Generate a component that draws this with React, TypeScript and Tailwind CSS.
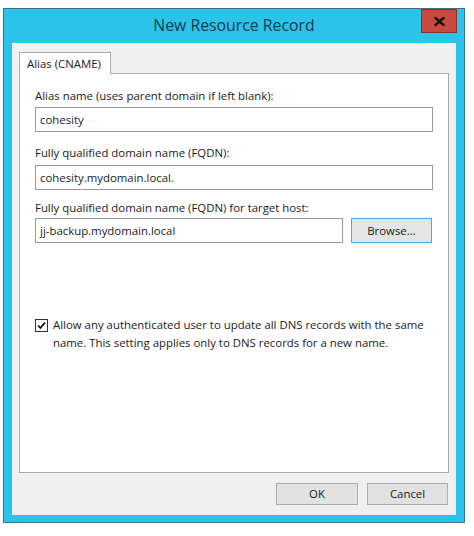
import React from "react";

const font = { fontFamily: '"Open Sans", "Noto Sans", "Liberation Sans", sans-serif' };

function Field({ value, className = "" }: { value: string; className?: string }) {
  return (
    <div
      className={`h-[25px] border border-[#9a9a9a] bg-white flex items-center pl-[4px] text-[11.4px] text-[#1a1a1a] leading-none ${className}`}
    >
      {value}
    </div>
  );
}

export default function App() {
  return (
    <div className="w-[474px] h-[536px] bg-white pt-[8px] pl-[3px]" style={font}>
      <div className="w-[462px] h-[515px] border border-[#3f7184] bg-[#2cc3ea] flex flex-col px-[8px] pb-[7px]">
        {/* Title bar */}
        <div className="relative h-[34px] flex items-center justify-center">
          <span className="text-[15.8px] text-[#173a4c]">New Resource Record</span>
          <div className="absolute right-[-1px] top-0 w-[36px] h-[24px] bg-[#c94840] border border-[#8e3129] flex items-center justify-center">
            <svg width="11" height="9" viewBox="0 0 11 9">
              <path d="M1.5 1 L9.5 8 M9.5 1 L1.5 8" stroke="#111" strokeWidth="2.4" strokeLinecap="square" />
            </svg>
          </div>
        </div>

        {/* Content */}
        <div className="flex-1 bg-[#f0f0f0] flex flex-col px-[7px] pt-[9px] pb-[10px]">
          <div className="self-start relative z-10 -mb-px h-[22px] w-[92px] bg-white border border-b-0 border-[#acacac] flex items-center pl-[7px] text-[11.4px] text-[#1a1a1a]">
            Alias (CNAME)
          </div>
          <div className="h-[400px] bg-white border border-[#acacac] flex flex-col px-[15px] pt-[13px]">
            <div className="h-[18px] leading-[18px] text-[11.4px] text-[#1a1a1a] mb-[2px]">
              Alias name (uses parent domain if left blank):
            </div>
            <Field value="cohesity" />
            <div className="h-[18px] leading-[18px] text-[11.4px] text-[#1a1a1a] mt-[12px] mb-[3px]">
              Fully qualified domain name (FQDN):
            </div>
            <Field value="cohesity.mydomain.local." />
            <div className="h-[18px] leading-[18px] text-[11.4px] text-[#1a1a1a] mt-[9px] mb-[1px]">
              Fully qualified domain name (FQDN) for target host:
            </div>
            <div className="flex items-center gap-[8px]">
              <Field value="jj-backup.mydomain.local" className="w-[308px]" />
              <div className="w-[81px] h-[25px] bg-[#e5e5e5] border border-[#5fa3d9] flex items-center justify-center text-[11.4px] text-[#1a1a1a]">
                Browse...
              </div>
            </div>

            <div className="flex mt-[73px]">
              <div className="h-[18px] flex items-center">
                <div className="w-[13px] h-[13px] border border-[#333] bg-white flex items-center justify-center">
                  <svg width="11" height="11" viewBox="0 0 11 11">
                    <path d="M2 5.5 L4.4 8 L9 2.5" stroke="#111" strokeWidth="1.8" fill="none" />
                  </svg>
                </div>
              </div>
              <div className="ml-[5px] text-[11.4px] leading-[18px] text-[#1a1a1a] whitespace-nowrap">
                Allow any authenticated user to update all DNS records with the same
                <br />
                name. This setting applies only to DNS records for a new name.
              </div>
            </div>
          </div>

          <div className="flex justify-end gap-[9px] mt-[10px] pr-[1px]">
            <div className="w-[82px] h-[22px] bg-[#e1e1e1] border border-[#adadad] flex items-center justify-center text-[11.4px] text-[#1a1a1a]">
              OK
            </div>
            <div className="w-[81px] h-[22px] bg-[#e1e1e1] border border-[#adadad] flex items-center justify-center text-[11.4px] text-[#1a1a1a]">
              Cancel
            </div>
          </div>
        </div>
      </div>
    </div>
  );
}
